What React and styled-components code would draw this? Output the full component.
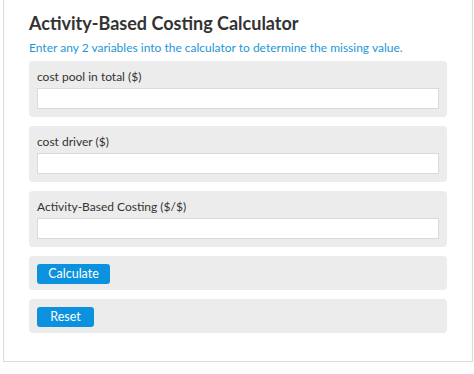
import React from "react";
import styled, { createGlobalStyle } from "styled-components";

const GlobalStyle = createGlobalStyle`
  html, body {
    margin: 0;
    padding: 0;
    background: #ffffff;
  }
  body {
    font-family: Lato, "Open Sans", sans-serif;
  }
`;

const Card = styled.div`
  margin-left: 3px;
  width: 470px;
  border: 1px solid #dcdcdc;
  border-top: none;
  background: #fff;
  padding: 11px 25px 28px 25px;
  box-sizing: border-box;
`;

const Title = styled.h1`
  margin: 0;
  font-family: Lato, sans-serif;
  font-size: 18px;
  font-weight: 700;
  color: #333;
  line-height: 24px;
`;

const Subtitle = styled.p`
  margin: 5px 0 5px 0;
  font-size: 12px;
  line-height: 16px;
  color: #1c97d6;
`;

const Group = styled.div`
  background: #ececec;
  border-radius: 4px;
  padding: ${(p) => (p.$button ? "8px 8px 6px 8px" : "8px 8px 8px 8px")};
  margin-bottom: 9px;
  &:last-child {
    margin-bottom: 0;
  }
`;

const Label = styled.label`
  display: block;
  font-size: 12px;
  line-height: 15px;
  color: #333;
  margin-bottom: 4px;
`;

const Input = styled.input`
  display: block;
  width: 100%;
  height: 21px;
  box-sizing: border-box;
  border: 1px solid #dadada;
  background: #fff;
  outline: none;
`;

const Button = styled.button`
  display: block;
  height: 20px;
  width: ${(p) => p.$w}px;
  padding: 0;
  border: none;
  border-radius: 3px;
  background: #0b91de;
  color: #fff;
  font-family: Lato, sans-serif;
  font-size: 12.5px;
  line-height: 20px;
  cursor: pointer;
`;

const fields = [
  "cost pool in total ($)",
  "cost driver ($)",
  "Activity-Based Costing ($/$)",
];

export default function App() {
  return (
    <>
      <GlobalStyle />
      <Card>
        <Title>Activity-Based Costing Calculator</Title>
        <Subtitle>
          Enter any 2 variables into the calculator to determine the missing value.
        </Subtitle>
        {fields.map((f) => (
          <Group key={f}>
            <Label>{f}</Label>
            <Input type="text" />
          </Group>
        ))}
        <Group $button>
          <Button $w={73}>Calculate</Button>
        </Group>
        <Group $button>
          <Button $w={57}>Reset</Button>
        </Group>
      </Card>
    </>
  );
}
